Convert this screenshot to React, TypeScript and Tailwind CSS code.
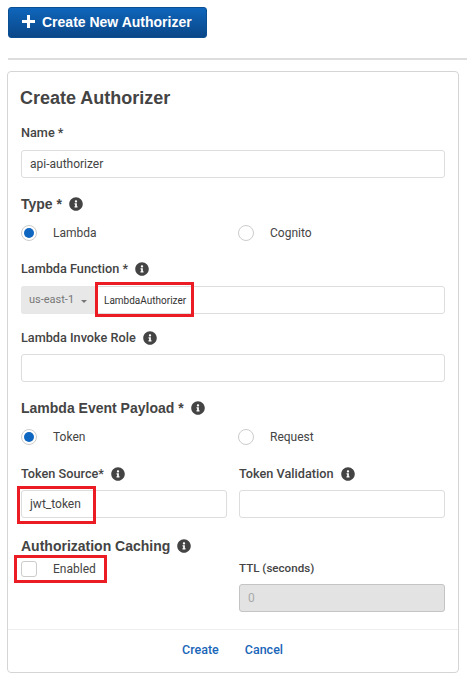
import { FaInfoCircle } from "react-icons/fa";

function Info() {
  return <FaInfoCircle className="ml-[7px] inline-block text-[14px] text-[#444]" />;
}

function Label({ text, big, cls }: { text: string; big?: boolean; cls?: string }) {
  return (
    <div className={`flex h-[18px] items-center text-[#444] ${big ? "font-['Liberation_Sans',sans-serif] text-[14px] font-bold" : "text-[12.7px] font-medium"} ${cls ?? ""}`}>
      <span>{text}</span>
      {text !== "Name *" && <Info />}
    </div>
  );
}

function Field({ value, cls }: { value?: string; cls?: string }) {
  return (
    <div className={`flex h-[28px] items-center rounded-[3px] border border-[#dddddd] bg-white px-[8px] text-[12px] text-[#444] ${cls ?? ""}`}>
      {value}
    </div>
  );
}

function Radio({ on, label, cls }: { on?: boolean; label: string; cls?: string }) {
  return (
    <div className={`flex h-[18px] items-center text-[12px] text-[#444] ${cls ?? ""}`}>
      <span className="flex h-[16px] w-[16px] items-center justify-center rounded-full border border-[#cccccc] bg-white">
        {on && <span className="h-[10px] w-[10px] rounded-full bg-[#0f66c0]" />}
      </span>
      <span className="ml-[16px]">{label}</span>
    </div>
  );
}

function RedBox({ cls }: { cls: string }) {
  return <div className={`absolute border-[3px] border-[#ec1c24] ${cls}`} />;
}

export default function App() {
  return (
    <div className="relative h-[681px] w-[467px] overflow-hidden bg-white font-['Roboto','Liberation_Sans',sans-serif]">
      <div className="pl-[8px] pt-[7px]">
        <div className="flex h-[31px] w-[199px] items-center rounded-[3px] border border-[#0b4f93] bg-gradient-to-b from-[#0f66bc] to-[#0a4788] pl-[13px] font-['Liberation_Sans',sans-serif] text-[14px] font-bold text-white">
          <svg width="13" height="13" viewBox="0 0 13 13" className="mb-[2px] mr-[7px]">
            <path d="M5 0h3v5h5v3H8v5H5V8H0V5h5z" fill="#fff" />
          </svg>
          Create New Authorizer
        </div>
        <div className="mt-[20px] h-[2px] bg-[#dddddd]" />
      </div>

      <div className="relative ml-[7px] mt-[11px] h-[602px] w-[452px] rounded-[4px] border border-[#d5d5d5] bg-white">
        <div className="px-[13px]">
          <div className="-ml-px mt-[15px] h-[22px] font-['Liberation_Sans',sans-serif] text-[18px] font-bold leading-[22px] text-[#444]">
            Create Authorizer
          </div>

          <Label text="Name *" cls="mt-[15px]" />
          <Field value="api-authorizer" cls="mt-[8px] w-[424px]" />

          <Label text="Type *" big cls="mt-[17px]" />
          <div className="mt-[11px] flex">
            <Radio on label="Lambda" cls="w-[217px]" />
            <Radio label="Cognito" />
          </div>

          <Label text="Lambda Function *" cls="mt-[18px]" />
          <div className="mt-[8px] flex h-[28px] w-[424px] rounded-[3px] border border-[#dddddd]">
            <div className="-my-px -ml-px flex w-[74px] items-center rounded-l-[3px] bg-[#e8e8e8] pl-[8px] text-[11px] text-[#777]">
              us-east-1
              <span className="ml-[7px] mt-[2px] h-0 w-0 border-x-[3px] border-t-[3px] border-x-transparent border-t-[#777]" />
            </div>
            <div className="flex items-center pl-[9px] text-[10px] text-[#333]">LambdaAuthorizer</div>
          </div>

          <Label text="Lambda Invoke Role" cls="mt-[15px]" />
          <Field cls="mt-[7px] w-[424px]" />

          <Label text="Lambda Event Payload *" big cls="mt-[17px]" />
          <div className="mt-[11px] flex">
            <Radio on label="Token" cls="w-[217px]" />
            <Radio label="Request" />
          </div>

          <div className="mt-[19px] grid w-[424px] grid-cols-2 gap-x-[12px]">
            <div>
              <Label text="Token Source*" />
              <Field value="jwt_token" cls="mt-[7px]" />
            </div>
            <div>
              <Label text="Token Validation" />
              <Field cls="mt-[7px]" />
            </div>
          </div>

          <Label text="Authorization Caching" big cls="mt-[19px]" />
          <div className="mt-[5px] grid w-[424px] grid-cols-2 gap-x-[12px]">
            <div className="flex h-[18px] items-center text-[12px] text-[#444]">
              <span className="h-[16px] w-[16px] rounded-[3px] border border-[#cccccc] bg-white" />
              <span className="ml-[16px]">Enabled</span>
            </div>
            <div>
              <div className="flex h-[18px] items-center text-[11.6px] font-medium text-[#444]">TTL (seconds)</div>
              <div className="mt-[6px] flex h-[28px] items-center rounded-[3px] border border-[#c4c4c4] bg-[#e3e3e3] px-[8px] text-[12px] text-[#aaa]">
                0
              </div>
            </div>
          </div>
        </div>

        <div className="mt-[17px] flex h-[42px] items-center justify-center gap-[26px] border-t border-[#eeeeee] pr-[1px] text-[12.5px] font-medium text-[#1a66b8]">
          <span>Create</span>
          <span>Cancel</span>
        </div>
      </div>

      <RedBox cls="left-[95px] top-[282px] h-[35px] w-[99px]" />
      <RedBox cls="left-[17px] top-[486px] h-[38px] w-[79px]" />
      <RedBox cls="left-[14px] top-[555px] h-[28px] w-[93px]" />
    </div>
  );
}
